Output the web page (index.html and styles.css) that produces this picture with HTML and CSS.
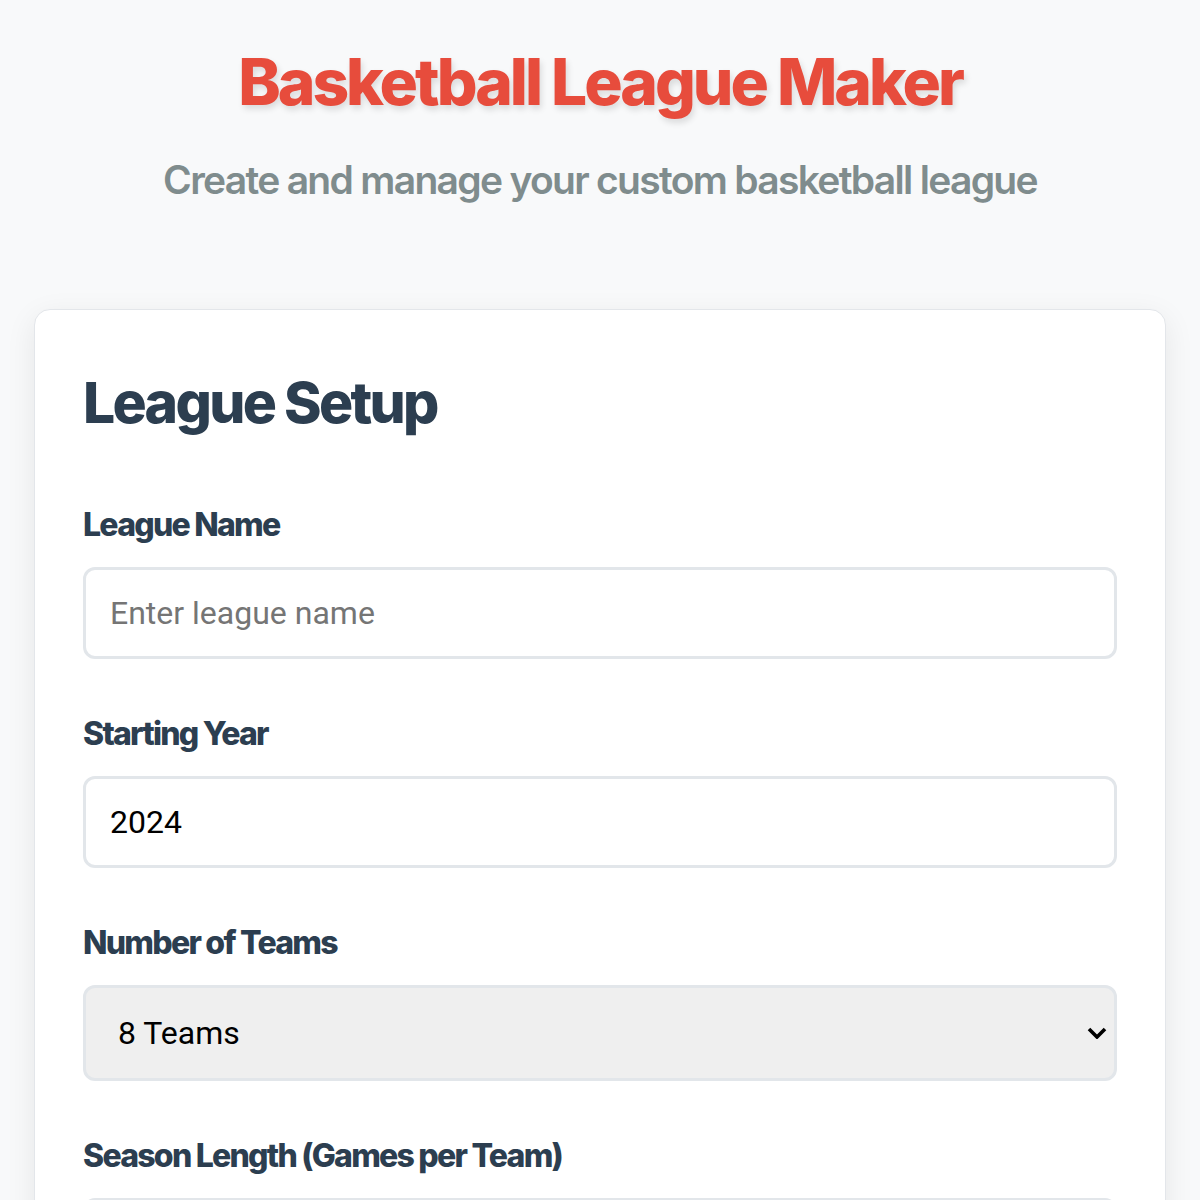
FILE: index.html
```html
<!DOCTYPE html>
<html lang="en">
<head>
    <meta charset="UTF-8">
    <meta name="viewport" content="width=device-width, initial-scale=1.0">
    <title>Basketball League Maker</title>
    <link rel="stylesheet" href="styles.css">
</head>
<body>
    <div class="container">
        <header class="page-header">
            <h1>Basketball League Maker</h1>
            <p>Create and manage your custom basketball league</p>
        </header>

        <div class="setup-card">
            <h2>League Setup</h2>
            <form id="leagueForm">
                <div class="form-group">
                    <label for="leagueName">League Name</label>
                    <input type="text" id="leagueName" name="leagueName" placeholder="Enter league name">
                </div>
                <div class="form-group">
                    <label for="startYear">Starting Year</label>
                    <input type="number" id="startYear" name="startYear" value="2024">
                </div>
                <div class="form-group">
                    <label for="numTeams">Number of Teams</label>
                    <div class="select-wrap">
                        <select id="numTeams" name="numTeams">
                            <option value="4">4 Teams</option>
                            <option value="6">6 Teams</option>
                            <option value="8" selected>8 Teams</option>
                            <option value="10">10 Teams</option>
                            <option value="12">12 Teams</option>
                        </select>
                        <svg class="chevron" viewBox="0 0 20 12" width="20" height="12"><path d="M2 2l8 8 8-8" fill="none" stroke="#000" stroke-width="3.6"/></svg>
                    </div>
                </div>
                <div class="form-group">
                    <label for="seasonLength">Season Length (Games per Team)</label>
                    <div class="select-wrap">
                        <select id="seasonLength" name="seasonLength">
                            <option value="20">20 Games</option>
                            <option value="40" selected>40 Games</option>
                            <option value="82">82 Games</option>
                        </select>
                        <svg class="chevron" viewBox="0 0 20 12" width="20" height="12"><path d="M2 2l8 8 8-8" fill="none" stroke="#000" stroke-width="3.6"/></svg>
                    </div>
                </div>
            </form>
        </div>
    </div>
</body>
</html>
```

FILE: styles.css
```css
body {
    font-family: Inter, "Noto Sans", sans-serif;
    margin: 0;
    padding: 0;
    background: #f8f9fa;
    color: #2c3e50;
}
.container {
    padding: 0 34px 40px;
}
.page-header {
    text-align: center;
    padding-top: 43px;
    margin-bottom: 106px;
}
.page-header h1 {
    margin: 0;
    font-size: 64px;
    font-weight: 800;
    letter-spacing: -3px;
    color: #e74c3c;
    text-shadow: 2px 4px 6px rgba(0, 0, 0, 0.12);
}
.page-header p {
    margin: 36px 0 0;
    font-size: 39px;
    font-weight: 600;
    letter-spacing: -1.7px;
    color: #7f8c8d;
}
.setup-card {
    background: #fff;
    border: 1px solid #e3e6ea;
    border-radius: 16px;
    padding: 62px 48px 40px;
    box-shadow: 0 8px 30px rgba(0, 0, 0, 0.08);
}
.setup-card h2 {
    margin: 0 0 70px;
    font-size: 57px;
    font-weight: 800;
    letter-spacing: -2.7px;
    line-height: 1.1;
}
.form-group {
    margin-bottom: 55px;
}
.form-group label {
    display: block;
    margin-bottom: 23px;
    font-size: 32px;
    font-weight: 800;
    letter-spacing: -1.75px;
    color: #2c3e50;
}
.form-group input,
.form-group select {
    display: block;
    width: 100%;
    box-sizing: border-box;
    font-family: Roboto, sans-serif;
    font-size: 32px;
    color: #000;
    border: 3px solid #e2e6ea;
    border-radius: 12px;
    outline: none;
}
.form-group input {
    height: 92px;
    padding: 0 24px;
    background: #fff;
}
.form-group input::placeholder {
    color: #757575;
}
.select-wrap {
    position: relative;
}
.form-group select {
    height: 96px;
    padding: 0 60px 0 32px;
    background: #efefef;
    appearance: none;
    -webkit-appearance: none;
}
.chevron {
    position: absolute;
    right: 10px;
    top: 42px;
    pointer-events: none;
}
```
